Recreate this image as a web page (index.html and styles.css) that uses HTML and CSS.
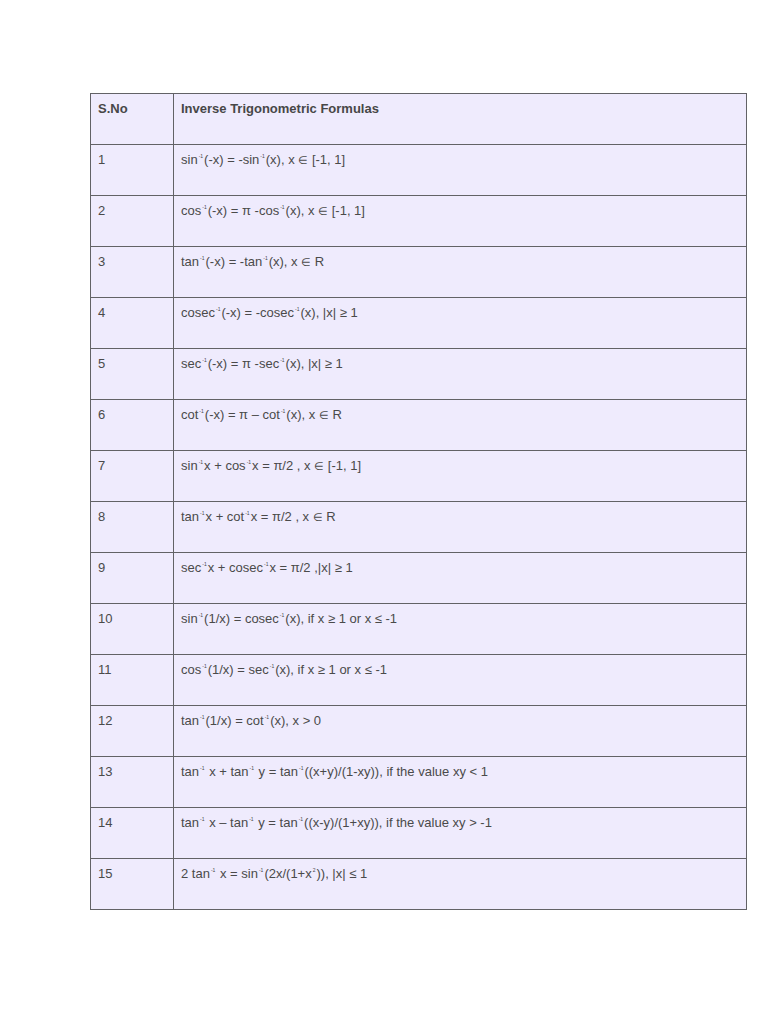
FILE: index.html
```html
<!DOCTYPE html>
<html>
<head>
<meta charset="utf-8">
<link rel="stylesheet" href="styles.css">
</head>
<body>
<div class="page">
<table class="formulas">
<colgroup><col class="c1"><col class="c2"></colgroup>
<thead>
<tr><th>S.No</th><th>Inverse Trigonometric Formulas</th></tr>
</thead>
<tbody>
<tr><td>1</td><td>sin<sup>-1</sup>(-x) = -sin<sup>-1</sup>(x), x <span class="el">∈</span> [-1, 1]</td></tr>
<tr><td>2</td><td>cos<sup>-1</sup>(-x) = π -cos<sup>-1</sup>(x), x <span class="el">∈</span> [-1, 1]</td></tr>
<tr><td>3</td><td>tan<sup>-1</sup>(-x) = -tan<sup>-1</sup>(x), x <span class="el">∈</span> R</td></tr>
<tr><td>4</td><td>cosec<sup>-1</sup>(-x) = -cosec<sup>-1</sup>(x), |x| ≥ 1</td></tr>
<tr><td>5</td><td>sec<sup>-1</sup>(-x) = π -sec<sup>-1</sup>(x), |x| ≥ 1</td></tr>
<tr><td>6</td><td>cot<sup>-1</sup>(-x) = π – cot<sup>-1</sup>(x), x <span class="el">∈</span> R</td></tr>
<tr><td>7</td><td>sin<sup>-1</sup>x + cos<sup>-1</sup>x = π/2 , x <span class="el">∈</span> [-1, 1]</td></tr>
<tr><td>8</td><td>tan<sup>-1</sup>x + cot<sup>-1</sup>x = π/2 , x <span class="el">∈</span> R</td></tr>
<tr><td>9</td><td>sec<sup>-1</sup>x + cosec<sup>-1</sup>x = π/2 ,|x| ≥ 1</td></tr>
<tr><td>10</td><td>sin<sup>-1</sup>(1/x) = cosec<sup>-1</sup>(x), if x ≥ 1 or x ≤ -1</td></tr>
<tr><td>11</td><td>cos<sup>-1</sup>(1/x) = sec<sup>-1</sup>(x), if x ≥ 1 or x ≤ -1</td></tr>
<tr><td>12</td><td>tan<sup>-1</sup>(1/x) = cot<sup>-1</sup>(x), x &gt; 0</td></tr>
<tr><td>13</td><td>tan<sup>-1</sup> x + tan<sup>-1</sup> y = tan<sup>-1</sup>((x+y)/(1-xy)), if the value xy &lt; 1</td></tr>
<tr><td>14</td><td>tan<sup>-1</sup> x – tan<sup>-1</sup> y = tan<sup>-1</sup>((x-y)/(1+xy)), if the value xy &gt; -1</td></tr>
<tr><td>15</td><td>2 tan<sup>-1</sup> x = sin<sup>-1</sup>(2x/(1+x<sup>2</sup>)), |x| ≤ 1</td></tr>
</tbody>
</table>
</div>
</body>
</html>
```
FILE: styles.css
```css
html, body {
  margin: 0;
  padding: 0;
  background: #ffffff;
}
.page {
  padding: 93px 0 0 90px;
}
.formulas {
  border-collapse: collapse;
  width: 656px;
  table-layout: fixed;
  font-family: "Liberation Sans", Arial, sans-serif;
  font-size: 13px;
  color: #4a4a4a;
  background: #efebfd;
}
.c1 { width: 83px; }
.c2 { width: 573px; }
.formulas th,
.formulas td {
  border: 1px solid #626266;
  height: 51px;
  box-sizing: border-box;
  padding: 7px 7px 0 7px;
  vertical-align: top;
  text-align: left;
  line-height: 16px;
}
.formulas th {
  font-weight: bold;
  color: #474747;
}
.formulas sup {
  font-size: 5px;
  line-height: 0;
  vertical-align: 6px;
  padding: 0 1px;
}
.formulas .el {
  font-size: 11px;
}
```
